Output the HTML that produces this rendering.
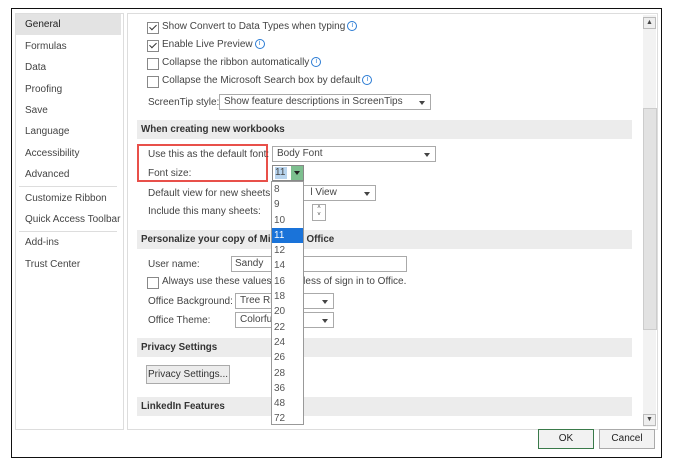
<html><head><style>
body{margin:0;width:674px;height:467px;background:#fff;font-family:"Liberation Sans",sans-serif;font-size:10px;color:#444;position:relative;overflow:hidden}
.a{position:absolute;white-space:nowrap}
.nav{left:25px}
.cb{position:absolute;width:10px;height:10px;border:1px solid #888;background:#fff}
.ck::after{content:"";position:absolute;left:3px;top:0px;width:3px;height:6px;border:solid #333;border-width:0 1.3px 1.3px 0;transform:rotate(45deg)}
.sel{position:absolute;border:1px solid #aaa;background:#fff;padding-left:4px;line-height:14px;box-sizing:border-box;height:16px}
.sel::after{content:"";position:absolute;right:5px;top:6px;border:3px solid transparent;border-top:4px solid #444}
.hd{position:absolute;left:137px;width:495px;height:19px;background:#ececec;font-weight:bold;line-height:19px;padding-left:4px;box-sizing:border-box;color:#333;font-size:9.8px}
.i{display:inline-block;width:8px;height:8px;border:1px solid #2a7bd4;border-radius:50%;font-size:7px;line-height:8px;text-align:center;color:#2a7bd4;vertical-align:top;margin-left:2px}
.dd div{height:15.3px;line-height:15px;padding-left:2px}
</style></head><body>
<div class="a" style="left:11px;top:8px;width:649px;height:448px;border:1.5px solid #111"></div>
<div class="a" style="left:15px;top:13px;width:107px;height:415px;border:1px solid #ddd"></div>
<div class="a" style="left:16px;top:14px;width:105px;height:21px;background:#e3e3e3"></div>
<div class="a nav" style="top:19px;color:#222">General</div>
<div class="a nav" style="top:41px">Formulas</div>
<div class="a nav" style="top:62px">Data</div>
<div class="a nav" style="top:84px">Proofing</div>
<div class="a nav" style="top:105px">Save</div>
<div class="a nav" style="top:126px">Language</div>
<div class="a nav" style="top:148px">Accessibility</div>
<div class="a nav" style="top:169px">Advanced</div>
<div class="a" style="left:19px;top:186px;width:98px;height:1px;background:#ddd"></div>
<div class="a nav" style="top:193px">Customize Ribbon</div>
<div class="a nav" style="top:214px">Quick Access Toolbar</div>
<div class="a" style="left:19px;top:231px;width:98px;height:1px;background:#ddd"></div>
<div class="a nav" style="top:237px">Add-ins</div>
<div class="a nav" style="top:259px">Trust Center</div>

<div class="a" style="left:127px;top:13px;width:529px;height:415px;border:1px solid #ddd"></div>
<div class="a" style="left:643px;top:15px;width:13px;height:412px;background:#f2f2f2"></div>
<div class="a" style="left:643px;top:108px;width:12px;height:220px;background:#e2e2e2;border:1px solid #ccc"></div>
<div class="a" style="left:643px;top:17px;width:11px;height:10px;border:1px solid #bbb;background:#eee;font-size:7px;text-align:center;line-height:10px">▲</div>
<div class="a" style="left:643px;top:414px;width:11px;height:10px;border:1px solid #bbb;background:#eee;font-size:7px;text-align:center;line-height:10px">▼</div>

<div class="cb ck" style="left:147px;top:22px"></div><div class="a" style="left:162px;top:21px">Show Convert to Data Types when typing<span class="i">i</span></div>
<div class="cb ck" style="left:147px;top:40px"></div><div class="a" style="left:162px;top:39px">Enable Live Preview<span class="i">i</span></div>
<div class="cb" style="left:147px;top:58px"></div><div class="a" style="left:162px;top:57px">Collapse the ribbon automatically<span class="i">i</span></div>
<div class="cb" style="left:147px;top:76px"></div><div class="a" style="left:162px;top:75px">Collapse the Microsoft Search box by default<span class="i">i</span></div>
<div class="a" style="left:148px;top:97px">ScreenTip style:</div>
<div class="sel" style="left:219px;top:94px;width:212px">Show feature descriptions in ScreenTips</div>

<div class="hd" style="top:120px">When creating new workbooks</div>
<div class="a" style="left:137px;top:144px;width:131px;height:38px;border:2px solid #e8504a;box-sizing:border-box"></div>
<div class="a" style="left:148px;top:149px">Use this as the default font:</div>
<div class="sel" style="left:272px;top:146px;width:164px">Body Font</div>
<div class="a" style="left:148px;top:168px">Font size:</div>
<div class="a" style="left:272px;top:165px;width:32px;height:16px;border:1px solid #888;box-sizing:border-box;background:#fff"></div>
<div class="a" style="left:275px;top:167px;width:12px;height:12px;background:#b8d4ee;line-height:12px">11</div>
<div class="a" style="left:291px;top:166px;width:12px;height:14px;background:#7dbf8f"></div>
<div class="a" style="left:294px;top:171px;border:3px solid transparent;border-top:4px solid #222"></div>
<div class="a" style="left:148px;top:188px">Default view for new sheets:</div>
<div class="sel" style="left:272px;top:185px;width:104px">&nbsp;&nbsp;&nbsp;&nbsp;&nbsp;&nbsp;&nbsp;&nbsp;&nbsp;&nbsp;&nbsp;&nbsp;l View</div>
<div class="a" style="left:148px;top:206px">Include this many sheets:</div>
<div class="a" style="left:312px;top:204px;width:12px;height:15px;border:1px solid #aaa;font-size:6px;text-align:center;line-height:7px">˄<br>˅</div>

<div class="hd" style="top:230px">Personalize your copy of Microsoft Office</div>
<div class="a" style="left:148px;top:259px">User name:</div>
<div class="a" style="left:231px;top:256px;width:176px;height:16px;border:1px solid #aaa;box-sizing:border-box;padding-left:3px;line-height:14px">Sandy</div>
<div class="cb" style="left:147px;top:277px"></div><div class="a" style="left:162px;top:276px">Always use these values regardless of sign in to Office.</div>
<div class="a" style="left:148px;top:296px">Office Background:</div>
<div class="sel" style="left:235px;top:293px;width:99px">Tree Rings</div>
<div class="a" style="left:148px;top:315px">Office Theme:</div>
<div class="sel" style="left:235px;top:312px;width:99px">Colorful</div>

<div class="hd" style="top:338px">Privacy Settings</div>
<div class="a" style="left:146px;top:365px;width:84px;height:19px;border:1px solid #aaa;background:#ececec;text-align:center;line-height:18px;box-sizing:border-box;color:#333">Privacy Settings...</div>
<div class="hd" style="top:397px">LinkedIn Features</div>

<div class="a dd" style="left:271px;top:181px;width:33px;height:244px;border:1px solid #999;background:#fff;box-sizing:border-box;color:#555">
<div>8</div><div>9</div><div>10</div><div style="background:#1a73d9;color:#fff">11</div><div>12</div><div>14</div><div>16</div><div>18</div><div>20</div><div>22</div><div>24</div><div>26</div><div>28</div><div>36</div><div>48</div><div>72</div></div>

<div class="a" style="left:538px;top:429px;width:56px;height:20px;border:1px solid #3a7a4a;box-sizing:border-box;background:#f2f2f2;text-align:center;line-height:18px;color:#222">OK</div>
<div class="a" style="left:599px;top:429px;width:56px;height:20px;border:1px solid #aaa;box-sizing:border-box;background:#f2f2f2;text-align:center;line-height:18px;color:#222">Cancel</div>
</body></html>
